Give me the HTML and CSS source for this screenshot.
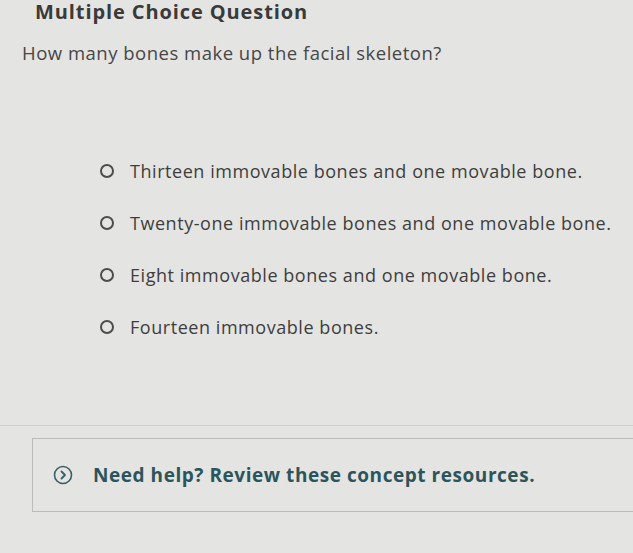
FILE: index.html
```html
<!DOCTYPE html>
<html>
<head>
<meta charset="utf-8">
<link rel="stylesheet" href="styles.css">
</head>
<body>
<div class="page">
  <h1 class="title">Multiple Choice Question</h1>
  <p class="question">How many bones make up the facial skeleton?</p>
  <ul class="options">
    <li class="option"><span class="radio"></span><span class="label">Thirteen immovable bones and one movable bone.</span></li>
    <li class="option"><span class="radio"></span><span class="label">Twenty-one immovable bones and one movable bone.</span></li>
    <li class="option"><span class="radio"></span><span class="label">Eight immovable bones and one movable bone.</span></li>
    <li class="option"><span class="radio"></span><span class="label">Fourteen immovable bones.</span></li>
  </ul>
  <div class="divider"></div>
  <div class="help">
    <svg class="help-icon" width="20" height="20" viewBox="0 0 20 20"><circle cx="10" cy="10" r="8.5" fill="none" stroke="#3a5f64" stroke-width="1.6"/><path d="M8.5 6.5 L12 10 L8.5 13.5" fill="none" stroke="#3a5f64" stroke-width="1.8" stroke-linecap="round" stroke-linejoin="round"/></svg>
    <span class="help-text">Need help? Review these concept resources.</span>
  </div>
</div>
</body>
</html>
```

FILE: styles.css
```css
html, body {
  margin: 0;
  padding: 0;
  background: #e4e4e2;
}
.page {
  width: 633px;
  height: 553px;
  overflow: hidden;
  font-family: "Open Sans", Lato, sans-serif;
  color: #3e3e3e;
}
.title {
  margin: 0 0 0 35px;
  padding-top: 1px;
  font-size: 20px;
  font-weight: 700;
  line-height: 22px;
  letter-spacing: 0.9px;
  color: #3a3a3a;
}
.question {
  margin: 19px 0 0 22px;
  font-size: 18.5px;
  line-height: 22px;
  letter-spacing: 0.5px;
  color: #474747;
}
.options {
  list-style: none;
  margin: 95px 0 0 0;
  padding: 0 0 0 100px;
  display: flex;
  flex-direction: column;
  gap: 28px;
}
.option {
  display: flex;
  align-items: center;
  gap: 16px;
  height: 24px;
}
.radio {
  width: 10px;
  height: 10px;
  border: 2.5px solid #4c4c4c;
  border-radius: 50%;
  flex: none;
}
.label {
  font-size: 18px;
  letter-spacing: 0.55px;
  color: #3e3e3e;
  white-space: nowrap;
}
.divider {
  margin: 86px 0 0 0;
  height: 1px;
  background: #cfd0ce;
}
.help {
  margin: 12px 0 0 32px;
  height: 72px;
  border: 1px solid #b9bcba;
  border-right: none;
  display: flex;
  align-items: center;
  gap: 20px;
  padding-left: 20px;
}
.help-icon {
  flex: none;
}
.help-text {
  font-size: 19px;
  font-weight: 700;
  letter-spacing: 0.55px;
  color: #2c555b;
  white-space: nowrap;
}
```
